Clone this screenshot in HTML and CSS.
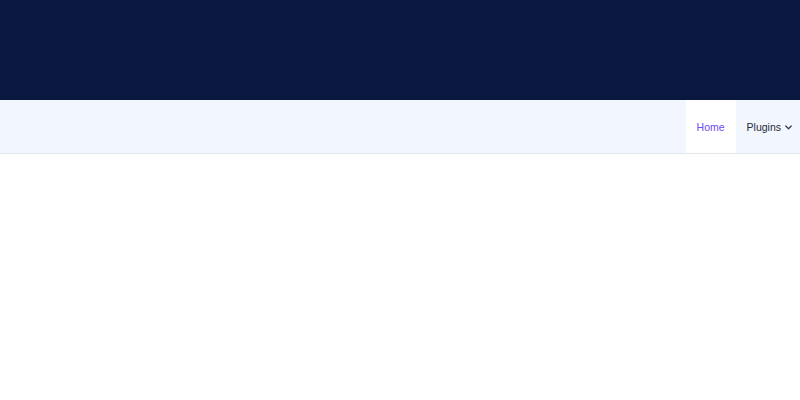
FILE: index.html
```html
<!DOCTYPE html>
<html>
<head>
<meta charset="utf-8">
<link rel="stylesheet" href="styles.css">
</head>
<body>
<header class="top"></header>
<nav class="nav">
  <ul class="menu">
    <li class="item active"><a href="#">Home</a></li>
    <li class="item"><a href="#">Plugins <svg class="chev" width="7" height="5" viewBox="0 0 7 5"><path d="M0.8 1 L3.5 3.8 L6.2 1" fill="none" stroke="#374151" stroke-width="1.3" stroke-linecap="round" stroke-linejoin="round"/></svg></a></li>
  </ul>
</nav>
</body>
</html>
```
FILE: styles.css
```css
html, body { margin: 0; padding: 0; background: #fff; }
body { font-family: "Liberation Sans", Arial, sans-serif; }
.top { height: 100px; background: #0a173f; }
.nav {
  height: 53px;
  background: #f2f6fe;
  border-bottom: 1px solid #e3e8ef;
  display: flex;
  justify-content: flex-end;
}
.menu { list-style: none; margin: 0; padding: 0; display: flex; }
.item a {
  display: flex;
  align-items: center;
  gap: 4px;
  height: 53px;
  padding: 0 11px;
  font-size: 10.5px;
  color: #1f2937;
  text-decoration: none;
}
.item:last-child a { padding-right: 8px; padding-left: 11px; }
.item.active a { width: 28px; justify-content: center; background: #ffffff; color: #6a4cf5; }
.chev { display: block; margin-top: 1px; }
```
